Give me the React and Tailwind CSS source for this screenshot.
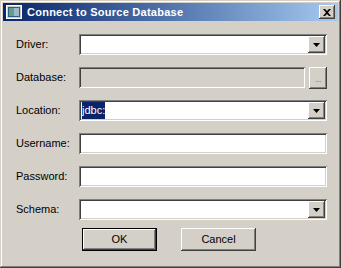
import React from 'react';

// Classic Win2000 dialog: "Connect to Source Database"

const sunken =
    'shadow-[inset_1px_1px_#808080,inset_-1px_-1px_#ffffff,inset_2px_2px_#404040,inset_-2px_-2px_#d4d0c8]';
const raised =
    'shadow-[inset_-1px_-1px_#404040,inset_1px_1px_#ffffff,inset_-2px_-2px_#808080,inset_2px_2px_#d4d0c8]';

function DropArrow() {
    return (
        <div className={`w-[17px] h-[17px] bg-[#d4d0c8] flex items-center justify-center ${raised}`}>
            <svg width="7" height="4" viewBox="0 0 7 4">
                <path d="M0 0h7L3.5 4z" fill="#000" />
            </svg>
        </div>
    );
}

function Field({ combo, disabled, children }) {
    return (
        <div
            className={`flex-1 h-[21px] flex items-center p-[2px] ${sunken} ${disabled ? 'bg-[#d4d0c8]' : 'bg-white'}`}
        >
            <div className="flex-1 h-full flex items-center pl-[1px] overflow-hidden">{children}</div>
            {combo && <DropArrow />}
        </div>
    );
}

function Row({ label, children }) {
    return (
        <div className="flex items-center h-[21px]">
            <span className="w-[63px] text-[11px] text-black">{label}</span>
            {children}
        </div>
    );
}

function Button({ label, isDefault }) {
    return (
        <div className={`w-[75px] h-[23px] ${isDefault ? 'border border-black' : ''}`}>
            <div
                className={`w-full h-full bg-[#d4d0c8] flex items-center justify-center text-[11px] text-black ${raised}`}
            >
                {label}
            </div>
        </div>
    );
}

export default function App() {
    return (
        <div
            className="w-[341px] h-[268px] bg-[#d4d0c8] p-[3px] flex flex-col shadow-[inset_-1px_-1px_#404040,inset_1px_1px_#d4d0c8,inset_-2px_-2px_#808080,inset_2px_2px_#ffffff]"
            style={{ fontFamily: '"Liberation Sans", Arial, sans-serif' }}
        >
            {/* Title bar */}
            <div className="h-[18px] flex items-center pl-[3px] pr-[3px] bg-gradient-to-r from-[#0a246a] to-[#a6caf0]">
                <svg width="16" height="14" viewBox="0 0 16 14" className="shrink-0">
                    <rect x="0.5" y="0.5" width="15" height="13" fill="#d4d0c8" stroke="#fff" />
                    <rect x="2" y="2" width="12" height="10" fill="#2f5d8a" />
                    <rect x="3" y="3" width="5" height="8" fill="#5f9f8a" />
                    <rect x="8" y="3" width="5" height="8" fill="#9bb9c8" />
                </svg>
                <span className="ml-[5px] text-[11px] font-bold text-white leading-none tracking-[0.25px]">
                    Connect to Source Database
                </span>
                <div
                    className={`ml-auto w-[16px] h-[14px] bg-[#d4d0c8] flex items-center justify-center ${raised}`}
                >
                    <svg width="8" height="7" viewBox="0 0 8 7">
                        <path d="M0 0h2l2 2 2-2h2L5 3.5 8 7H6L4 5 2 7H0l3-3.5z" fill="#000" />
                    </svg>
                </div>
            </div>

            {/* Form */}
            <div className="flex flex-col gap-[12px] pl-[13px] pr-[11px] mt-[13px]">
                <Row label="Driver:">
                    <Field combo />
                </Row>
                <Row label="Database:">
                    <div className="flex-1 flex items-center gap-[4px]">
                        <Field disabled />
                        <div
                            className={`w-[18px] h-[22px] bg-[#d4d0c8] flex items-end justify-center pb-[5px] ${raised}`}
                        >
                            <span className="text-[9px] leading-none text-[#808080] tracking-tighter">...</span>
                        </div>
                    </div>
                </Row>
                <Row label="Location:">
                    <Field combo>
                        <span className="bg-[#0a246a] text-white text-[11px] leading-[17px] h-full">jdbc:</span>
                    </Field>
                </Row>
                <Row label="Username:">
                    <Field />
                </Row>
                <Row label="Password:">
                    <Field />
                </Row>
                <Row label="Schema:">
                    <Field combo />
                </Row>
            </div>

            {/* Buttons */}
            <div className="flex gap-[24px] pl-[79px] mt-[8px]">
                <Button label="OK" isDefault />
                <Button label="Cancel" />
            </div>
        </div>
    );
}
